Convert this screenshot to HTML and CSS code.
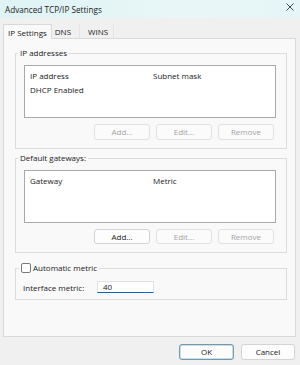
FILE: index.html
```html
<!DOCTYPE html>
<html>
<head>
<meta charset="utf-8">
<link rel="stylesheet" href="styles.css">
</head>
<body>
<div class="window">
  <div class="titlebar">
    <span class="title">Advanced TCP/IP Settings</span>
    <svg class="close" width="8" height="8" viewBox="0 0 8 8"><path d="M0.5 0.5 L7.5 7.5 M7.5 0.5 L0.5 7.5" stroke="#333" stroke-width="0.9" fill="none"/></svg>
  </div>
  <div class="tabs">
    <div class="tab active">IP Settings</div>
    <div class="tab dns">DNS</div>
    <div class="tab wins">WINS</div>
  </div>
  <div class="panel">
    <fieldset class="group g1">
      <legend>IP addresses</legend>
      <div class="listbox">
        <div class="row head"><span class="c1">IP address</span><span class="c2">Subnet mask</span></div>
        <div class="row"><span class="c1">DHCP Enabled</span></div>
      </div>
      <div class="btnrow">
        <button class="btn" disabled>Add...</button>
        <button class="btn" disabled>Edit...</button>
        <button class="btn" disabled>Remove</button>
      </div>
    </fieldset>
    <fieldset class="group g2">
      <legend>Default gateways:</legend>
      <div class="listbox">
        <div class="row head"><span class="c1">Gateway</span><span class="c2">Metric</span></div>
      </div>
      <div class="btnrow">
        <button class="btn">Add...</button>
        <button class="btn" disabled>Edit...</button>
        <button class="btn" disabled>Remove</button>
      </div>
    </fieldset>
    <fieldset class="group g3">
      <legend><span class="check"></span>Automatic metric</legend>
      <div class="metric">
        <span class="mlabel">Interface metric:</span>
        <div class="input">40</div>
      </div>
    </fieldset>
  </div>
  <div class="footer">
    <button class="btn dlg ok">OK</button>
    <button class="btn dlg">Cancel</button>
  </div>
</div>
</body>
</html>
```
FILE: styles.css
```css
* { box-sizing: border-box; }
html, body { margin: 0; padding: 0; }
body {
  width: 300px;
  height: 365px;
  background: #f0f0f0;
  font-family: "Open Sans", "Liberation Sans", sans-serif;
  font-size: 8px;
  color: #1a1a1a;
  overflow: hidden;
}
.window { width: 300px; height: 365px; display: flex; flex-direction: column; }
.titlebar {
  height: 18px;
  background: linear-gradient(90deg, #dff3f5 0%, #e8f6f7 60%, #e6f5f7 100%);
  display: flex;
  align-items: center;
  justify-content: space-between;
  padding: 0 6px 0 5px;
}
.title { font-size: 8.2px; color: #222; }
.close { margin-top: -4px; }
.tabs {
  display: flex;
  margin: 5px 0 0 3px;
  height: 15px;
  align-items: flex-end;
}
.tab {
  height: 13px;
  display: flex;
  align-items: center;
  color: #1a1a1a;
}
.tab.dns { padding: 0 8px 0 3px; border-right: 1px solid #e4e4e4; }
.tab.wins { padding: 0 5px 0 8px; border-right: 1px solid #e4e4e4; }
.tab.active {
  height: 15px;
  background: #f9f9f9;
  border: 1px solid #d9d9d9;
  border-bottom: none;
  padding: 0 4px 0 4px;
  position: relative;
  top: 1px;
}
.panel {
  margin: 0 4px 0 3px;
  height: 299px;
  background: #f9f9f9;
  border: 1px solid #d9d9d9;
  padding: 9px 8px 0 11px;
  display: flex;
  flex-direction: column;
}
.group {
  margin: 0;
  border: 1px solid #dcdcdc;
  padding: 0;
  min-width: 0;
}
.group legend {
  padding: 0 2px;
  margin-left: 2px;
  line-height: 10px;
  display: flex;
  align-items: center;
}
.g1 { height: 101px; }
.g2 { height: 100px; margin-top: 4px; }
.g3 { height: 37px; margin-top: 10px; }
.g3 legend { margin-left: 3px; }
.listbox {
  background: #fff;
  border: 1px solid #a9a9a9;
  height: 53px;
  margin: 7px 10px 0 8px;
  padding: 3px 0 0 5px;
}
.row { display: flex; height: 17px; align-items: center; }
.row.head { height: 12px; }
.c1 { width: 123px; }
.btnrow {
  display: flex;
  justify-content: flex-end;
  gap: 6px;
  margin-top: 6px;
  padding-right: 12px;
}
.btn {
  font-family: inherit;
  font-size: 8px;
  width: 56px;
  height: 16px;
  background: #fdfdfd;
  border: 1px solid #d3d3d3;
  border-radius: 3px;
  color: #1a1a1a;
  padding: 0;
  line-height: 14px;
}
.g2 .btn { height: 15px; }
.btn:disabled { color: #a3a3a3; background: #fbfbfb; border-color: #e0e0e0; }
.check {
  width: 10px;
  height: 10px;
  border: 1px solid #7a7a7a;
  border-radius: 2px;
  background: #fff;
  margin-right: 2px;
  display: inline-block;
}
.metric { display: flex; align-items: center; margin: 8px 0 0 7px; }
.mlabel { width: 74px; }
.input {
  width: 57px;
  height: 12px;
  background: #fff;
  border: 1px solid #e2e2e2;
  border-bottom: 1px solid #0067c0;
  padding-left: 5px;
  line-height: 10px;
  display: flex;
  align-items: center;
}
.footer {
  display: flex;
  justify-content: flex-end;
  gap: 7px;
  padding: 7px 5px 0 0;
}
.dlg { width: 55px; height: 16px; }
.dlg + .dlg { width: 54px; }
.ok { border: 1px solid #6f9aad; box-shadow: inset 0 0 0 0.5px #9fbfcc; }
```
